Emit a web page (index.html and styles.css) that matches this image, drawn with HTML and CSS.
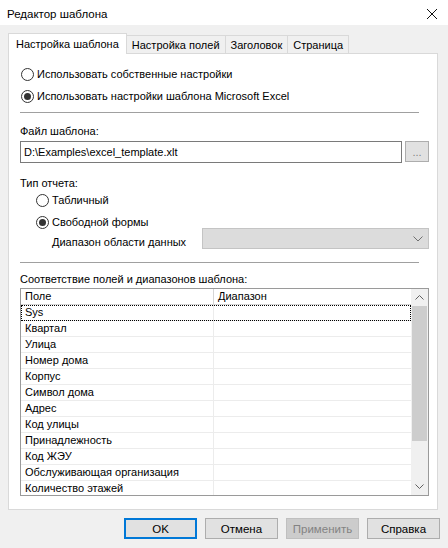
FILE: index.html
```html
<!DOCTYPE html>
<html lang="ru">
<head>
<meta charset="utf-8">
<title>Редактор шаблона</title>
<link rel="stylesheet" href="styles.css">
</head>
<body>
<div class="window">
  <div class="titlebar">
    <span class="title">Редактор шаблона</span>
    <svg class="close" width="12" height="12" viewBox="0 0 12 12"><path d="M1 1 L11 11 M11 1 L1 11" stroke="#111" stroke-width="1" fill="none"/></svg>
  </div>
  <div class="tabs">
    <div class="tab active">Настройка шаблона</div>
    <div class="tab">Настройка полей</div>
    <div class="tab">Заголовок</div>
    <div class="tab">Страница</div>
  </div>
  <div class="panel">
    <div class="radio-row first"><span class="radio"></span><span>Использовать собственные настройки</span></div>
    <div class="radio-row second"><span class="radio checked"></span><span>Использовать настройки шаблона Microsoft Excel</span></div>
    <div class="sep sep1"></div>
    <div class="label file-label">Файл шаблона:</div>
    <div class="file-row">
      <div class="input">D:\Examples\excel_template.xlt</div>
      <div class="browse">...</div>
    </div>
    <div class="label type-label">Тип отчета:</div>
    <div class="radio-row sub r-tab"><span class="radio"></span><span>Табличный</span></div>
    <div class="radio-row sub r-free"><span class="radio checked"></span><span>Свободной формы</span></div>
    <div class="range-row">
      <span class="range-label">Диапазон области данных</span>
      <div class="combo">
        <svg width="10" height="6" viewBox="0 0 10 6"><path d="M0.5 0.5 L5 5 L9.5 0.5" stroke="#707070" stroke-width="1" fill="none"/></svg>
      </div>
    </div>
    <div class="sep sep2"></div>
    <div class="label map-label">Соответствие полей и диапазонов шаблона:</div>
    <div class="grid">
      <div class="grid-body">
        <div class="row head"><div class="cell">Поле</div><div class="cell">Диапазон</div></div>
        <div class="row focus"><div class="cell">Sys</div><div class="cell"></div></div>
        <div class="row"><div class="cell">Квартал</div><div class="cell"></div></div>
        <div class="row"><div class="cell">Улица</div><div class="cell"></div></div>
        <div class="row"><div class="cell">Номер дома</div><div class="cell"></div></div>
        <div class="row"><div class="cell">Корпус</div><div class="cell"></div></div>
        <div class="row"><div class="cell">Символ дома</div><div class="cell"></div></div>
        <div class="row"><div class="cell">Адрес</div><div class="cell"></div></div>
        <div class="row"><div class="cell">Код улицы</div><div class="cell"></div></div>
        <div class="row"><div class="cell">Принадлежность</div><div class="cell"></div></div>
        <div class="row"><div class="cell">Код ЖЭУ</div><div class="cell"></div></div>
        <div class="row"><div class="cell">Обслуживающая организация</div><div class="cell"></div></div>
        <div class="row"><div class="cell">Количество этажей</div><div class="cell"></div></div>
      </div>
      <div class="scrollbar">
        <div class="arrow">
          <svg width="9" height="5" viewBox="0 0 9 5"><path d="M0.5 4.5 L4.5 0.5 L8.5 4.5" stroke="#606060" stroke-width="1" fill="none"/></svg>
        </div>
        <div class="track"><div class="thumb"></div></div>
        <div class="arrow">
          <svg width="9" height="5" viewBox="0 0 9 5"><path d="M0.5 0.5 L4.5 4.5 L8.5 0.5" stroke="#606060" stroke-width="1" fill="none"/></svg>
        </div>
      </div>
    </div>
  </div>
  <div class="buttons">
    <div class="btn default">OK</div>
    <div class="btn">Отмена</div>
    <div class="btn disabled">Применить</div>
    <div class="btn">Справка</div>
  </div>
</div>
</body>
</html>
```

FILE: styles.css
```css
* { box-sizing: border-box; }
html, body { margin: 0; padding: 0; }
body {
  width: 448px;
  height: 548px;
  background: #f0f0f0;
  font-family: "Liberation Sans", Arial, sans-serif;
  font-size: 11px;
  color: #000;
  overflow: hidden;
}
.window { width: 448px; height: 548px; display: flex; flex-direction: column; }

.titlebar {
  height: 25px;
  background: #fff;
  display: flex;
  align-items: center;
  justify-content: space-between;
  padding: 2px 10px 0 7px;
}
.title { font-size: 11.5px; }
.close { display: block; }

.tabs {
  display: flex;
  align-items: flex-end;
  margin: 8px 0 0 8px;
  height: 20px;
}
.tab {
  height: 18px;
  padding: 0 5px;
  display: flex;
  align-items: center;
  background: #f0f0f0;
  border: 1px solid #d9d9d9;
  border-left: none;
  border-bottom: none;
  white-space: nowrap;
}
.tab.active {
  height: 21px;
  margin-bottom: -1px;
  padding: 0 7px 1px 7px;
  background: #fff;
  border-left: 1px solid #d9d9d9;
  position: relative;
  z-index: 1;
}

.panel {
  margin: 0 10px 0 8px;
  height: 457px;
  background: #fff;
  border: 1px solid #d9d9d9;
  padding: 0 8px 0 11px;
  display: flex;
  flex-direction: column;
}

.radio-row {
  display: flex;
  align-items: center;
  height: 20px;
  white-space: nowrap;
}
.radio-row.first { margin-top: 10px; }
.radio-row.second { margin-top: 2px; }
.radio {
  width: 13px;
  height: 13px;
  border: 1px solid #333;
  border-radius: 50%;
  margin: 0 3px 0 1px;
  flex: none;
  display: flex;
  align-items: center;
  justify-content: center;
  background: #fff;
}
.radio.checked::after {
  content: "";
  width: 7px;
  height: 7px;
  border-radius: 50%;
  background: #333;
}
.radio-row.sub { padding-left: 15px; height: 12px; }
.r-tab { margin-top: 4px; }
.r-free { margin-top: 10px; }

.sep { height: 1px; background: #a0a0a0; margin-right: 10px; flex: none; }
.sep1 { margin-top: 6px; }
.sep2 { margin-top: 13px; }

.label { height: 14px; line-height: 14px; white-space: nowrap; }
.file-label { margin-top: 11px; }
.type-label { margin-top: 13px; }
.map-label { margin-top: 9px; }

.file-row { display: flex; margin-top: 3px; height: 22px; }
.input {
  flex: 1;
  height: 22px;
  border: 1px solid #7a7a7a;
  padding: 0 3px;
  display: flex;
  align-items: center;
  white-space: nowrap;
}
.browse {
  width: 24px;
  height: 21px;
  margin-left: 3px;
  background: #e1e1e1;
  border: 1px solid #adadad;
  color: #838383;
  display: flex;
  align-items: flex-end;
  justify-content: center;
  padding-bottom: 3px;
  font-size: 11px;
}

.range-row {
  display: flex;
  align-items: center;
  height: 21px;
  margin-top: 0;
  padding-left: 32px;
}
.range-label { padding-top: 6px; white-space: nowrap; }
.combo {
  margin-left: auto;
  width: 227px;
  height: 21px;
  background: #dcdcdc;
  border: 1px solid #c4c4c4;
  display: flex;
  align-items: center;
  justify-content: flex-end;
  padding-right: 5px;
}
.combo svg { display: block; }

.grid {
  margin-top: 2px;
  height: 208px;
  border: 1px solid #9a9a9a;
  display: flex;
  overflow: hidden;
}
.grid-body { flex: 1; overflow: hidden; }
.row {
  display: grid;
  grid-template-columns: 193px 1fr;
  height: 16px;
  border-bottom: 1px solid #ececec;
}
.row .cell {
  padding-left: 4px;
  line-height: 15px;
  white-space: nowrap;
  overflow: hidden;
}
.row .cell:first-child { border-right: 1px solid #ececec; }
.row.head { background: #fff; border-bottom: 1px solid #d5d5d5; }
.row.head .cell:first-child { border-right: 1px solid #d5d5d5; }
.row.focus { outline: 1px dotted #000; outline-offset: -1px; }

.scrollbar {
  width: 17px;
  background: #f0f0f0;
  display: flex;
  flex-direction: column;
}
.arrow {
  height: 17px;
  flex: none;
  display: flex;
  align-items: center;
  justify-content: center;
}
.arrow svg { display: block; }
.track { flex: 1; padding: 0 1px; }
.thumb { height: 135px; background: #cdcdcd; }

.buttons {
  display: flex;
  justify-content: flex-end;
  gap: 8px;
  padding: 0 8px 0 0;
  margin-top: 8px;
}
.btn {
  width: 73px;
  height: 21px;
  background: #e1e1e1;
  border: 1px solid #adadad;
  display: flex;
  align-items: center;
  justify-content: center;
  font-size: 11.5px;
}
.btn.default { border: 2px solid #0078d7; }
.btn.disabled { background: #cccccc; border-color: #bfbfbf; color: #838383; }
```
